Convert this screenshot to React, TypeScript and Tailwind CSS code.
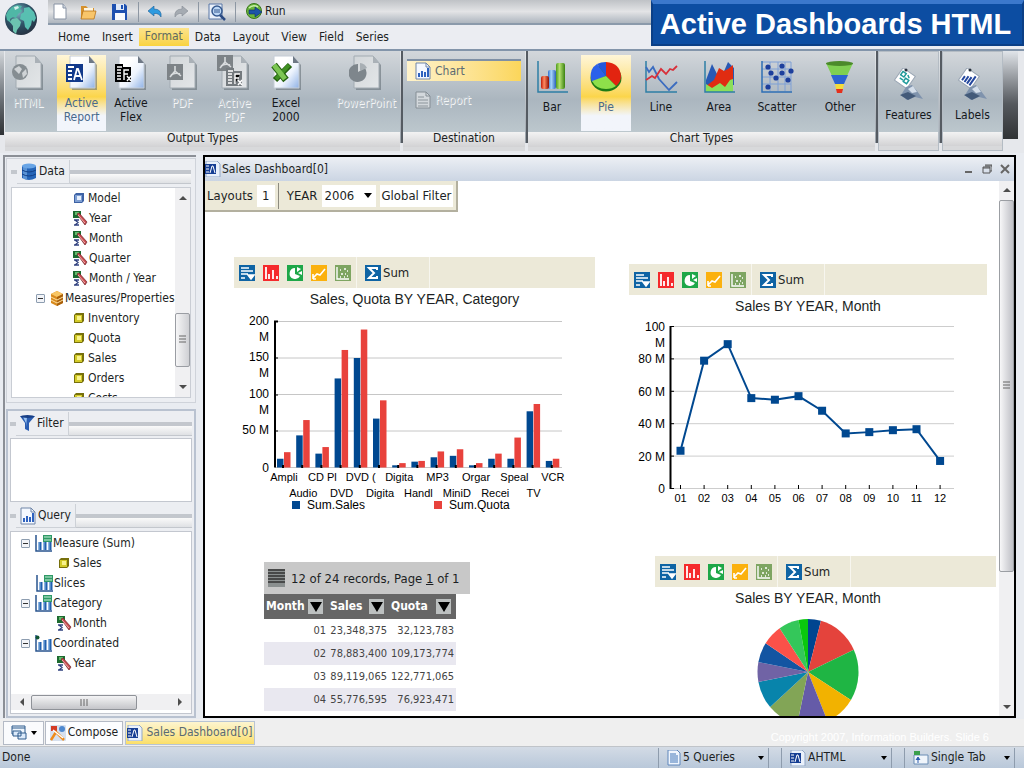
import React from "react";

type Kids = { children?: React.ReactNode };

/* ---------- icons ---------- */

function Globe() {
  return (
    <svg width="34" height="34" viewBox="0 0 34 34" aria-hidden="true">
      <defs>
        <radialGradient id="globe" cx="0.4" cy="0.3" r="0.75">
          <stop offset="0" stopColor="#7fb3c4" />
          <stop offset="0.5" stopColor="#2f5468" />
          <stop offset="1" stopColor="#26303f" />
        </radialGradient>
      </defs>
      <circle cx="17" cy="17" r="16" fill="url(#globe)" />
      <path d="M4 9 8 5l5-2 5 1-2 3 2 2-4 3-2 4-3-1-3 2 1 4-4-3-1-5z" fill="#4fb7a6" />
      <path d="M8 17l5-1 4 4-1 4-3 4-1 4-3-3 0-5-3-4z" fill="#6cc4b0" />
      <path d="M20 6l5-1 5 5 2 6-2 4-2-2-1 5-3 5-3-3-1-6-4-2 1-5 3-2z" fill="#58bfb1" />
      <path d="M10 5l4-1 1 2-4 2z" fill="#d7f0ec" />
    </svg>
  );
}

function Doc({ children, off = false }: Kids & { off?: boolean }) {
  return (
    <svg width="34" height="36" viewBox="0 0 34 36" aria-hidden="true">
      <defs>
        <linearGradient id="docOn" x1="0" y1="0" x2="1" y2="1">
          <stop offset="0.3" stopColor="#ffffff" />
          <stop offset="0.6" stopColor="#eef4fd" />
          <stop offset="1" stopColor="#8fb2e6" />
        </linearGradient>
        <linearGradient id="docOff" x1="0" y1="0" x2="1" y2="1">
          <stop offset="0" stopColor="#d2d6d9" />
          <stop offset="1" stopColor="#e3e6e8" />
        </linearGradient>
      </defs>
      <path d="M6 2h19l7 8v25H7z" fill="#5d6770" opacity="0.55" />
      <path d="M5 1h19l6 7v25H5z" fill={off ? "url(#docOff)" : "url(#docOn)"} stroke={off ? "#a2abb2" : "#c4ccd6"} strokeWidth="1" />
      <path d="M24 1l6 7h-6z" fill={off ? "#aab1b7" : "#6e7885"} />
      {children}
    </svg>
  );
}

const PdfMark = ({ x = 2, y = 9 }: { x?: number; y?: number }) => (
  <g transform={`translate(${x} ${y})`}>
    <rect width="16" height="16" fill="#7d8387" />
    <path d="M8 2v5L3 13M8 7l6 5M4 11q4-3 9-1" stroke="#d9dcde" strokeWidth="1.6" fill="none" />
  </g>
);

const FlexMark = ({ x = 1, y = 9, c = "#000" }: { x?: number; y?: number; c?: string }) => (
  <g transform={`translate(${x} ${y})`}>
    <path d="M0 0h8v3h8v15H0z" fill={c} />
    <path d="M2 3h5M2 6h4M2 9h4M2 12h4M2 15h4M9 16V6h5M9 10h4M12 12l4 5M16 12l-4 5" stroke="#fff" strokeWidth="1.4" />
  </g>
);

const ReportMark = ({ x = 1, y = 9 }: { x?: number; y?: number }) => (
  <g transform={`translate(${x} ${y})`}>
    <path d="M0 0h17v18H0z" fill="#123a8c" />
    <path d="M2 3h6M2 7h4M2 11h4M2 15h4" stroke="#fff" strokeWidth="1.8" />
    <path d="M8 16 11 5h1l4 11M9 12h5" stroke="#fff" strokeWidth="1.8" fill="none" />
  </g>
);

const ExcelMark = () => (
  <g fill="none">
    <path d="M5 10 17 25" stroke="#24600f" strokeWidth="7" />
    <path d="M21 10 6 25" stroke="#24600f" strokeWidth="6" />
    <path d="M20 10 7 24" stroke="#3f8f22" strokeWidth="4" />
    <path d="M5 10 16 24" stroke="#7cc653" strokeWidth="5" />
  </g>
);

function Svg({ w, h, children, box }: Kids & { w: number; h: number; box?: string }) {
  return (
    <svg width={w} height={h} viewBox={box ?? `0 0 ${w} ${h}`} className="shrink-0" aria-hidden="true">
      {children}
    </svg>
  );
}

const BarIcon = () => (
  <Svg w={32} h={34}>
    <defs>
      <linearGradient id="gb" x1="0" x2="1"><stop offset="0" stopColor="#4f9c1c" /><stop offset="0.4" stopColor="#b4e070" /><stop offset="1" stopColor="#3a8210" /></linearGradient>
      <linearGradient id="bb" x1="0" x2="1"><stop offset="0" stopColor="#2e6fd0" /><stop offset="0.4" stopColor="#a9d6fa" /><stop offset="1" stopColor="#2c62bc" /></linearGradient>
      <linearGradient id="rb" x1="0" x2="1"><stop offset="0" stopColor="#c01b08" /><stop offset="0.4" stopColor="#ff8a60" /><stop offset="1" stopColor="#8d0d02" /></linearGradient>
    </defs>
    <path d="M2 1v31h30" stroke="#2e7fa5" strokeWidth="1.5" fill="none" />
    <rect x="20" y="3" width="9" height="26" rx="2" fill="url(#gb)" />
    <rect x="12" y="10" width="8" height="19" rx="2" fill="url(#bb)" />
    <rect x="5" y="16" width="8" height="13" rx="2" fill="url(#rb)" />
  </Svg>
);

const PieIcon = () => (
  <Svg w={34} h={32}>
    <ellipse cx="17" cy="17" rx="15.500" ry="13.500" fill="#1e7c14" />
    <path d="M17 15 8 3q4-2 9-2z" fill="#2456dd" />
    <path d="M17 15 8 3Q0 8 2 18l1 3z" fill="#2b60ea" />
    <path d="M17 15V1q14 1 15 14 0 6-5 10z" fill="#e22410" />
    <path d="M17 15 3 20q4 8 14 8 6 0 10-3z" fill="#8ee04a" />
  </Svg>
);

const LineIcon = () => (
  <Svg w={34} h={34}>
    <path d="M2 1v31h31" stroke="#2e7fa5" strokeWidth="1.5" fill="none" />
    <path d="M2 7l3 5 4-5 6 12 10 11 8-8" stroke="#3b6cc0" strokeWidth="1.8" fill="none" />
    <path d="M2 20l6-4 3 2 6-9 5 5 4-5 3 1 4-4" stroke="#d8303a" strokeWidth="1.8" fill="none" />
  </Svg>
);

const AreaIcon = () => (
  <Svg w={32} h={34}>
    <path d="M3 20 9 4l5 10 5 2 6-14 6 6v17H3z" fill="#2859b4" />
    <path d="M3 26 11 20l5-12 5 3 4-2 5-4v24H3z" fill="#e02c12" />
    <path d="M3 24l6 4 8-5 5 4 5-7 3-1v13H3z" fill="#8bdf5a" />
    <path d="M2 1v31h30" stroke="#2e7fa5" strokeWidth="1.5" fill="none" />
  </Svg>
);

const ScatterIcon = () => (
  <Svg w={34} h={34}>
    <path d="M2 2h29v29M10 2v29M18 2v29M25 2v29M2 9h29M2 17h29M2 24h29" stroke="#7fa0d6" fill="none" />
    <path d="M2 1v31h30" stroke="#2e6fb5" strokeWidth="1.5" fill="none" />
    {[[8, 7], [22, 6], [11, 13], [22, 13], [31, 11], [16, 18], [28, 20], [8, 27]].map(([x, y]) => (
      <circle key={`${x}-${y}`} cx={x} cy={y} r="2.600" fill="#1d3f9c" />
    ))}
  </Svg>
);

const FunnelIcon = () => (
  <Svg w={30} h={34}>
    <path d="M1 3 7 16h15l6-13z" fill="#7fcf52" />
    <ellipse cx="14.500" cy="3.500" rx="13.500" ry="2.500" fill="#4b8a2b" />
    <path d="M6 15h17l-4 9h-9z" fill="#2c63d2" />
    <path d="M10 24h9l-1 5h-7z" fill="#f4dc3a" />
    <path d="M11 29h7l-1 4h-5z" fill="#e5301c" />
  </Svg>
);

const HandIcon = ({ labels = false }: { labels?: boolean }) => (
  <Svg w={34} h={34}>
    <g transform="rotate(35 13 11)">
      <rect x="5" y="3" width="15" height="15" fill="#fff" stroke="#9aa6b4" />
      {labels ? (
        <path d="M8 16v-5M11 16V9M14 16V8M17 16V5" stroke="#24479e" strokeWidth="2" />
      ) : (
        <path d="M7 6h4v4H7zM13 10h4v4h-4zM8 13h4M13 6l3 2" stroke="#1f9a9a" strokeWidth="1.5" fill="none" />
      )}
    </g>
    <circle cx="14" cy="2" r="1.500" fill="#27303c" />
    <path d="M14 19l6-2 5 6 6 8-8-2-8 3-6-5z" fill="#7f93ad" />
    <path d="M8 27l8-3 8 4-8 4z" fill="#435a79" />
    <path d="M16 21l5-3 4 6-5 1z" fill="#d4deea" />
  </Svg>
);

const ChartPage = ({ off = false }: { off?: boolean }) => (
  <Svg w={16} h={18}>
    <path d="M1 1h10l4 4v12H1z" fill={off ? "#d3d8dc" : "#f4f8ff"} stroke={off ? "#858e95" : "#7086a8"} />
    <path d="M11 1v4h4" fill="none" stroke={off ? "#858e95" : "#7086a8"} />
    {off ? (
      <path d="M3 6h6M3 9h10M3 12h10M3 15h10" stroke="#8b949a" />
    ) : (
      <path d="M4 15v-4M7 15V9M10 15v-5M13 15V6" stroke="#2e62bf" strokeWidth="2" />
    )}
  </Svg>
);

const ReportPage = () => (
  <Svg w={16} h={16}>
    <path d="M1 0h11l3 3v13H1z" fill="#eaf1fb" stroke="#92a7c6" />
    <rect x="0" y="3" width="11" height="10" fill="#173f94" />
    <path d="M1 5h3M1 8h3M1 11h3M5 12l2-7h1l2 7" stroke="#fff" fill="none" />
  </Svg>
);

const Tool = () => (
  <Svg w={16} h={16}>
    <path d="M1 1h8v7H1z" fill="#1c6a30" />
    <path d="M3 2h4v3H3z" fill="#63bd6d" />
    <path d="M5 4l2-1 8 9-2 3z" fill="#c8484e" stroke="#71262a" strokeWidth="0.7" />
    <path d="M6 5l7 8" stroke="#f0b4b0" />
    <path d="M2 10h5M2 15h5M3 10l3 2.500L3 15" stroke="#31427f" strokeWidth="1.300" fill="none" />
  </Svg>
);

const Cube = ({ blue = false }: { blue?: boolean }) => (
  <Svg w={10} h={10}>
    <path d="M0 2l2-2h8v8l-2 2H0z" fill={blue ? "#3d62a5" : "#77700c"} />
    <rect x="1" y="2" width="7" height="7" fill={blue ? "#7f9fd2" : "#d3cb2a"} />
    <rect x="3" y="3" width="4" height="4" fill={blue ? "#e6effc" : "#f8f28c"} />
  </Svg>
);

const Boxes = () => (
  <Svg w={14} h={15}>
    <path d="M1 3l6-3 6 3v9l-6 3-6-3z" fill="#d88a1e" />
    <path d="M1 3l6-3 6 3-6 3z" fill="#f8c665" />
    <path d="M7 6v9l6-3V3z" fill="#a9600b" />
    <path d="M1 6l6 3 6-3M1 9l6 3 6-3" stroke="#ffe0a0" fill="none" />
  </Svg>
);

const QueryBars = ({ plain = false }: { plain?: boolean }) => (
  <Svg w={17} h={17}>
    <path d="M1 0v16h16" stroke="#28548e" strokeWidth="1.5" fill="none" />
    <path d="M5 15V7M10 15V5M15 15V4" stroke="#2160ad" strokeWidth="3" />
    <path d="M4 15V7M9 15V5M14 15V4" stroke="#8ab7e8" />
    {plain ? (
      <circle cx="2.500" cy="2.500" r="2" fill="#153" />
    ) : (
      <>
        <rect x="8" y="0" width="9" height="7" fill="#2f9966" />
        <path d="M9 2h7M9 5h7" stroke="#c8f0d8" />
      </>
    )}
  </Svg>
);

const Minus = () => (
  <button aria-label="Collapse" className="grid size-[9px] shrink-0 place-items-center rounded-[1px] border border-[#8d9db0] bg-[#f2f4f8]">
    <span className="h-px w-[5px] bg-[#333]" />
  </button>
);

const Database = () => (
  <Svg w={16} h={18}>
    <path d="M1 3v12q7 4 14 0V3z" fill="#2565b8" />
    <path d="M3 4v12M5 4v12" stroke="#8ec1f2" />
    <ellipse cx="8" cy="3" rx="7" ry="2.500" fill="#69a5e6" />
    <path d="M1 7q7 4 14 0M1 11q7 4 14 0" stroke="#123f87" fill="none" />
  </Svg>
);

const Funnel = () => (
  <Svg w={15} h={17}>
    <path d="M0 1h15L9 8v8l-4-2V8z" fill="#2b5eb2" />
    <path d="M3 2h4l-1 10V8z" fill="#9cc5f3" />
    <ellipse cx="7.500" cy="1.500" rx="7" ry="1.500" fill="#183f86" />
  </Svg>
);

/* ---------- ribbon ---------- */

function RibbonGroup({ title, className, children }: Kids & { title: string; className: string }) {
  return (
    <section className={`flex flex-col ${className}`}>
      <div className="flex flex-1 bg-linear-to-b from-[#d3d7db] via-[#abb6bf] via-60% to-[#bcc7cd] pt-1">{children}</div>
      <h2 className="h-[15px] bg-linear-to-b from-[#f3f3f3] to-[#d2d2d4] text-center leading-[13px]">{title}</h2>
      <div className="h-1 bg-[#d8d9db]" />
    </section>
  );
}

const Divider = () => <div className="mb-2 w-[3px] border-r-2 border-[#555b62] bg-linear-to-b from-[#e4e7ea] to-[#9aa2aa]" />;

function BigButton({ icon, label, className, on = false, off = false }: { icon: React.ReactNode; label: string; className: string; on?: boolean; off?: boolean }) {
  const tone = on
    ? "bg-linear-to-b from-[#fff6d8] via-[#fbd549] via-55% to-[#f2f5fb] to-80% text-[#4a6a8c]"
    : off
      ? "text-[#b9c2c9] [text-shadow:1px_1px_0_#f4f6f7]"
      : "text-[#15181c]";
  return (
    <button disabled={off} className={`flex h-[76px] flex-col items-center leading-[14px] whitespace-pre-line ${tone} ${className}`}>
      <span className="flex h-9 items-center">{icon}</span>
      <span className="mt-[5px]">{label}</span>
    </button>
  );
}

function Ribbon() {
  return (
    <div className="flex h-[104px] shrink-0 border-t-2 border-[#8395aa] bg-[#e6e8ec] pb-[2px]">
      <div className="mr-px mb-4 w-1 bg-linear-to-b from-[#d3d7db] via-[#777d83] to-[#2f3235]" />
      <RibbonGroup title="Output Types" className="w-[395px]">
        <BigButton off className="w-[52px] pr-[6px]" label="HTML" icon={<Doc off><circle cx="9" cy="17" r="8" fill="#858d92" /><path d="M3 14l5-3 3 3-3 5zM11 18l4-4 1 5-4 4z" fill="#cfd3d6" /></Doc>} />
        <BigButton on className="w-[49px]" label={"Active\nReport"} icon={<Doc><ReportMark /></Doc>} />
        <BigButton className="w-[50px]" label={"Active\nFlex"} icon={<Doc><FlexMark /></Doc>} />
        <BigButton off className="w-[52px]" label="PDF" icon={<Doc off><PdfMark /></Doc>} />
        <BigButton off className="w-[52px]" label={"Active\nPDF"} icon={<Doc off><PdfMark x={0} y={0} /><FlexMark x={9} y={13} c="#747a7e" /></Doc>} />
        <BigButton className="w-[52px]" label={"Excel\n2000"} icon={<Doc><ExcelMark /></Doc>} />
        <BigButton off className="ml-[20px] w-[68px]" label="PowerPoint" icon={<Doc off><path d="M9 9v8l7-4a9 9 0 1 1-7-4z" fill="#7e868c" /><path d="M11 8a9 9 0 0 1 7 5l-7 3z" fill="#a8afb4" /></Doc>} />
      </RibbonGroup>
      <Divider />
      <RibbonGroup title="Destination" className="w-[122px]">
        <div className="flex flex-1 flex-col gap-2 px-1 pt-1">
          <button className="flex h-[22px] items-center gap-1 border-t-2 border-[#7f90a5] bg-linear-to-r from-[#fff3cb] to-[#fbd65a] pl-2 text-[#5c6a72]"><ChartPage />Chart</button>
          <button disabled className="flex h-[22px] items-center gap-1 pl-2 text-[#b9c2c9] [text-shadow:1px_1px_0_#f4f6f7]"><ChartPage off />Report</button>
        </div>
      </RibbonGroup>
      <Divider />
      <RibbonGroup title="Chart Types" className="w-[347px]">
        <BigButton className="w-[48px] pt-[4px]" label="Bar" icon={<BarIcon />} />
        <BigButton on className="ml-[5px] w-[50px] pt-[4px]" label="Pie" icon={<PieIcon />} />
        <BigButton className="ml-[5px] w-[50px] pt-[4px]" label="Line" icon={<LineIcon />} />
        <BigButton className="ml-[8px] w-[50px] pt-[4px]" label="Area" icon={<AreaIcon />} />
        <BigButton className="ml-[8px] w-[50px] pt-[4px]" label="Scatter" icon={<ScatterIcon />} />
        <BigButton className="ml-[13px] w-[50px] pt-[4px]" label="Other" icon={<FunnelIcon />} />
      </RibbonGroup>
      <Divider />
      <RibbonGroup title="" className="w-[61px] border border-[#b4bcc4]">
        <BigButton className="w-full pt-[11px]" label="Features" icon={<HandIcon />} />
      </RibbonGroup>
      <Divider />
      <RibbonGroup title="" className="w-[61px] border border-[#b4bcc4]">
        <BigButton className="w-full pt-[11px]" label="Labels" icon={<HandIcon labels />} />
      </RibbonGroup>
      <div className="mr-[6px] mb-3 flex-1 bg-linear-to-b from-[#e1e5ea] via-[#55595e] via-60% to-[#303335]" />
    </div>
  );
}

/* ---------- header ---------- */

function QuickBar() {
  const btn = "grid h-[22px] place-items-center";
  return (
    <div className="flex h-[25px] items-center border-b-2 border-[#8b9aab] bg-linear-to-b from-[#bfc2c6] via-[#e3e4e6] to-[#aeb6bf]">
      <button aria-label="New" className={`${btn} w-[24px]`}><Svg w={14} h={17}><path d="M1 1h9l3 4v11H1z" fill="#fff" stroke="#8792a3" /><path d="M10 1v4h3" fill="#cdd6e2" stroke="#8792a3" /></Svg></button>
      <button aria-label="Open" className={`${btn} w-[32px]`}><Svg w={17} h={16}><path d="M1 2h5l2 2h6v11H1z" fill="#d6912c" /><path d="M4 4h9v6H4z" fill="#fff6e0" /><path d="M3 7h13l-2 8H1z" fill="#f8c56a" stroke="#b8741a" strokeWidth="0.8" /></Svg></button>
      <button aria-label="Save" className={`${btn} w-[30px]`}><Svg w={15} h={16}><path d="M0 0h13l2 2v14H0z" fill="#1d50b0" /><path d="M4 0h8v6H4z" fill="#dfe9f8" /><path d="M9 1h2v4H9z" fill="#1d50b0" /><path d="M3 9h10v7H3z" fill="#f6f9fe" /></Svg></button>
      <span className="ml-[4px] h-[20px] w-px bg-[#8d97a3]" />
      <button aria-label="Undo" className={`${btn} w-[32px]`}><Svg w={14} h={12}><path d="M0 5l6-5v3q8 0 7 8-2-4-7-3.500V10z" fill="#2d9be0" stroke="#1b5c96" strokeWidth="0.6" /></Svg></button>
      <button aria-label="Redo" className={`${btn} w-[20px]`}><Svg w={14} h={12}><path d="M14 5 8 0v3Q0 3 1 11q2-4 7-3.500V10z" fill="#a5abb2" stroke="#858c94" strokeWidth="0.6" /></Svg></button>
      <span className="ml-[7px] h-[20px] w-px bg-[#8d97a3]" />
      <button aria-label="Preview" className={`${btn} w-[36px]`}><Svg w={18} h={18}><path d="M1 1h13v15H1z" fill="#eaf1fa" stroke="#5977a6" /><path d="M11 11l6 6" stroke="#2b4a82" strokeWidth="2.5" /><circle cx="9" cy="8" r="5" fill="#bcd7f5" stroke="#35598f" strokeWidth="1.500" /><path d="M6 7h6M6 9h6" stroke="#35598f" /></Svg></button>
      <span className="h-[20px] w-px bg-[#8d97a3]" />
      <button className="ml-[10px] flex h-[22px] items-center gap-[2px]"><Svg w={17} h={17}><circle cx="8" cy="8" r="7.500" fill="#6ab63c" stroke="#38761c" /><path d="M3 5q4-4 9-1" stroke="#c8efa8" strokeWidth="1.500" fill="none" /><path d="M3 7h6V4l7 5-7 5v-3H3z" fill="#1c54a8" stroke="#0e2d63" strokeWidth="0.6" /></Svg>Run</button>
    </div>
  );
}

function Header() {
  const tabs = ["Home", "Insert", "Format", "Data", "Layout", "View", "Field", "Series"];
  return (
    <header className="flex h-[49px] shrink-0 bg-[#ebedf2]">
      <div className="w-[48px] pt-[2px] pl-1"><Globe /></div>
      <div className="flex-1">
        <QuickBar />
        <nav className="flex h-[24px] items-center pl-[4px]">
          {tabs.map((t) => (
            <a key={t} href={`#${t}`} className={t === "Format" ? "h-[18px] bg-linear-to-b from-[#fce38a] to-[#f9d33e] px-[6px] leading-[17px] text-[#5f6b62]" : "px-[6px] leading-[18px]"}>{t}</a>
          ))}
        </nav>
      </div>
    </header>
  );
}

/* ---------- side panel ---------- */

function PanelTab({ icon, title }: { icon: React.ReactNode; title: string }) {
  return (
    <div className="flex h-[24px] items-end">
      <div className="h-[14px] w-[6px] border-t-4 border-[#c3c7cd]" />
      <h2 className="flex h-[24px] items-center gap-[2px] border-r border-b border-[#cdd1d7] bg-[#eceef2] px-1">{icon}{title}</h2>
      <div className="h-[14px] flex-1 border-t-4 border-b border-[#c3c7cd] bg-linear-to-b from-[#fafafa] to-[#dfe1e4]" />
    </div>
  );
}

function Node({ icon, text, pad, open = false }: { icon: React.ReactNode; text: string; pad: string; open?: boolean }) {
  return (
    <li className={`flex h-[20px] shrink-0 items-center whitespace-nowrap ${pad}`}>
      {open && <span className="mr-1 flex"><Minus /></span>}
      {icon}
      <span>{text}</span>
    </li>
  );
}

const Arrow = ({ dir }: { dir: "up" | "down" | "left" | "right" }) => {
  const d = { up: "M0 6h8L4 2z", down: "M0 2h8L4 6z", left: "M6 0v8L2 4z", right: "M2 0v8l4-4z" }[dir];
  return <Svg w={8} h={8}><path d={d} fill="#4d4d4d" /></Svg>;
};

function SidePanel() {
  return (
    <aside className="flex w-[193px] shrink-0 flex-col gap-[6px] border-t-2 border-l-2 border-[#8b8f96] bg-[#e9ecf1] pt-px pl-px">
      <section className="flex min-h-0 flex-[246] flex-col border border-[#cfd3da] bg-[#eceef2] p-1 pt-px">
        <PanelTab icon={<Database />} title="Data" />
        <div className="mt-[3px] flex min-h-0 flex-1 border border-[#c9cdd4] bg-white">
          <ul className="flex min-w-0 flex-1 flex-col overflow-hidden">
            <Node pad="gap-1 pl-[62px]" icon={<Cube blue />} text="Model" />
            {["Year", "Month", "Quarter", "Month / Year"].map((t) => <Node key={t} pad="gap-px pl-[60px]" icon={<Tool />} text={t} />)}
            <Node pad="gap-px pl-[24px]" open icon={<Boxes />} text="Measures/Properties" />
            {["Inventory", "Quota", "Sales", "Orders", "Costs"].map((t) => <Node key={t} pad="gap-1 pl-[62px]" icon={<Cube />} text={t} />)}
          </ul>
          <div className="flex w-[15px] shrink-0 flex-col items-center bg-[#f0f0f2] py-[6px]">
            <Arrow dir="up" />
            <div className="flex-[108]" />
            <div className="grid h-[54px] w-[15px] place-items-center rounded-[2px] border border-[#9a9da3] bg-linear-to-r from-[#f6f6f7] to-[#cfd0d4]">
              <Svg w={7} h={9}><path d="M0 1h7M0 4h7M0 7h7" stroke="#666" /></Svg>
            </div>
            <div className="flex-[16]" />
            <Arrow dir="down" />
          </div>
        </div>
      </section>
      <section className="flex min-h-0 flex-[312] flex-col border-2 border-[#b9c2d0] bg-[#eceef2] p-[2px] pt-px">
        <PanelTab icon={<Funnel />} title="Filter" />
        <div className="mt-[2px] h-[64px] border border-[#c3c7cf] bg-white" />
        <div className="mt-[2px]"><PanelTab icon={<ChartPage />} title="Query" /></div>
        <div className="mt-[3px] flex min-h-0 flex-1 flex-col border border-[#c3c7cf] bg-white">
          <ul className="flex min-h-0 flex-1 flex-col overflow-hidden pt-px">
            <Node open pad="gap-px pl-[10px]" icon={<QueryBars />} text="Measure (Sum)" />
            <Node pad="gap-1 pl-[48px]" icon={<Cube />} text="Sales" />
            <Node pad="gap-px pl-[25px]" icon={<QueryBars />} text="Slices" />
            <Node open pad="gap-px pl-[10px]" icon={<QueryBars />} text="Category" />
            <Node pad="gap-px pl-[45px]" icon={<Tool />} text="Month" />
            <Node open pad="gap-px pl-[10px]" icon={<QueryBars plain />} text="Coordinated" />
            <Node pad="gap-px pl-[45px]" icon={<Tool />} text="Year" />
          </ul>
          <div className="mb-[3px] flex h-[16px] items-center bg-[#f0f0f2] px-[7px]">
            <Arrow dir="left" />
            <div className="ml-[5px] grid h-[15px] w-[106px] place-items-center rounded-[2px] border border-[#8f9298] bg-linear-to-b from-[#f4f4f5] to-[#c4c5c9]">
              <Svg w={9} h={7}><path d="M1 0v7M4 0v7M7 0v7" stroke="#666" /></Svg>
            </div>
            <div className="flex-1" />
            <Arrow dir="right" />
          </div>
        </div>
      </section>
    </aside>
  );
}

/* ---------- dashboard widgets ---------- */

const tiles: { name: string; color: string; art: React.ReactNode }[] = [
  { name: "Table", color: "#0f64a4", art: <path d="M2 3h8M2 6h12M2 9h7M2 13h4M9 10h6l-3 4z" stroke="#fff" strokeWidth="1.500" fill="#fff" /> },
  { name: "Bar chart", color: "#f52a2c", art: <path d="M3 2v12M6 9v5M10 5v9M14 11v3" stroke="#fff" strokeWidth="1.800" /> },
  { name: "Pie chart", color: "#1ea748", art: <><path d="M8 3a5.500 5.500 0 1 0 5 8L8 9z" fill="#fff" /><path d="M10 2v5l4-3zM11 8l4-2v4z" fill="#fff" /></> },
  { name: "Line chart", color: "#fbb10e", art: <path d="M2 14V9M2 13l4-4 3 1 5-6M2 14h3" stroke="#fff" strokeWidth="1.600" fill="none" /> },
  { name: "Scatter chart", color: "#7ea562", art: <path d="M2 2v12h12M5 5h1M9 4h2M12 6h1M6 9h2M10 9h1M5 12h1M9 12h1M12 11h1" stroke="#fff" strokeWidth="1.400" fill="none" /> },
];

function WidgetBar() {
  return (
    <div className="flex h-[31px] items-center bg-[#ece9d8]">
      <div className="flex h-full w-[123px] items-center gap-2 border-r border-white/60 pl-[5px]">
        {tiles.map((t) => (
          <button key={t.name} aria-label={t.name} className="flex"><Svg w={16} h={16}><rect width="16" height="16" fill={t.color} />{t.art}</Svg></button>
        ))}
      </div>
      <button className="flex h-full w-[73px] items-center gap-[2px] border-r border-white/60 pl-2 text-[13px]">
        <Svg w={16} h={16}><rect width="16" height="16" fill="#0f64a4" /><path d="M12 5V3H4l5 5-5 5h8v-2" stroke="#fff" strokeWidth="2" fill="none" /></Svg>
        Sum
      </button>
    </div>
  );
}

const WidgetTitle = ({ children }: Kids) => (
  <h3 className="pt-[2px] text-center font-['Liberation_Sans',Arial,sans-serif] text-[14px] leading-[18px]">{children}</h3>
);

const sales = [12, 44, 19, 122, 150, 67, 3, 8, 14, 16, 3, 12, 12, 77, 9];
const quota = [21, 65, 28, 161, 189, 92, 6, 9, 22, 25, 6, 19, 41, 87, 12];
const cats = ["Ampli", "Audio", "CD Pl", "DVD", "DVD (", "Digita", "Digita", "Handl", "MP3", "MiniD", "Orgar", "Recei", "Speal", "TV", "VCR"];

function BarChart() {
  return (
    <svg viewBox="0 0 361 204" className="w-full font-['Liberation_Sans',Arial,sans-serif]" role="img" aria-label="Sales and quota by category">
      {[200, 150, 100, 50, 0].map((v) => (
        <path key={v} d={`M41 ${159.5 - v * 0.73}h287`} stroke="#c6c6c6" />
      ))}
      <g fontSize="12" textAnchor="end">
        <text x="35" y="17">200</text><text x="35" y="33">M</text>
        <text x="35" y="53">150</text><text x="35" y="69">M</text>
        <text x="35" y="90">100</text><text x="35" y="106">M</text>
        <text x="35" y="126">50 M</text>
        <text x="35" y="164">0</text>
      </g>
      {cats.map((c, i) => {
        const x = 43 + i * 19.2;
        return (
          <g key={i}>
            <rect x={x} y={159.5 - sales[i] * 0.73} width="6.500" height={sales[i] * 0.73} fill="#004890" />
            <rect x={x + 7} y={159.5 - quota[i] * 0.73} width="6.500" height={quota[i] * 0.73} fill="#e8423c" />
            <path d={`M${x + 6} 157v3`} stroke="#000" strokeWidth="2" />
            <text x={x + 7} y={i % 2 ? 189 : 173} fontSize="11" textAnchor="middle">{c}</text>
          </g>
        );
      })}
      <path d="M44 13.500h-3v146" stroke="#000" strokeWidth="2" fill="none" />
      <path d="M41 50h3M41 87h3M41 123h3" stroke="#000" />
      <rect x="58" y="193" width="8" height="8" fill="#004890" />
      <rect x="200" y="193" width="8" height="8" fill="#e8423c" />
      <g fontSize="12"><text x="73" y="201">Sum.Sales</text><text x="215" y="201">Sum.Quota</text></g>
    </svg>
  );
}

const monthly = [23.3, 78.9, 89.1, 55.8, 54.8, 57, 48, 34, 34.8, 36, 36.6, 17];

function LineChart() {
  const pts = monthly.map((v, i) => [51.5 + i * 23.6, 173.5 - v * 1.62]);
  return (
    <svg viewBox="0 0 358 190" className="w-full font-['Liberation_Sans',Arial,sans-serif]" role="img" aria-label="Sales by month">
      {[100, 80, 60, 40, 20, 0].map((v) => (
        <g key={v}>
          <path d={`M41 ${173.5 - v * 1.62}h284`} stroke="#cdcdcd" />
          <path d={`M41 ${173.5 - v * 1.62}h4`} stroke="#000" />
          <text x="36" y={178 - v * 1.62} fontSize="12" textAnchor="end">{v === 100 ? "100" : v === 0 ? "0" : `${v} M`}</text>
        </g>
      ))}
      <text x="36" y="32" fontSize="12" textAnchor="end">M</text>
      <path d="M41.500 11v163" stroke="#000" strokeWidth="2" />
      <polyline points={pts.map((p) => p.join(",")).join(" ")} fill="none" stroke="#004890" strokeWidth="2" />
      {pts.map(([x, y], i) => (
        <g key={i}>
          <path d={`M${x} 170v4`} stroke="#000" />
          <rect x={x - 4} y={y - 4} width="8" height="8" fill="#004890" />
          <text x={x} y="187" fontSize="11" textAnchor="middle">{String(i + 1).padStart(2, "0")}</text>
        </g>
      ))}
    </svg>
  );
}

const pieColors = ["#004590", "#e4433c", "#1fb544", "#f2b200", "#655ba8", "#82a556", "#0884ab", "#7063a5", "#1355a2", "#fb5149", "#34c75a", "#0ac80e"];

function PieChart() {
  const total = monthly.reduce((a, b) => a + b, 0);
  let acc = 0;
  const at = (v: number) => {
    const a = (v / total) * Math.PI * 2;
    return `${51 + 50.5 * Math.sin(a)} ${54 - 53 * Math.cos(a)}`;
  };
  return (
    <svg width="102" height="108" viewBox="0 0 102 108" role="img" aria-label="Sales share by month">
      {monthly.map((v, i) => {
        const from = at(acc);
        acc += v;
        return <path key={i} d={`M51 54L${from}A50.500 53 0 0 1 ${at(acc)}z`} fill={pieColors[i]} />;
      })}
    </svg>
  );
}

const rows = [
  ["01", "23,348,375", "32,123,783"],
  ["02", "78,883,400", "109,173,774"],
  ["03", "89,119,065", "122,771,065"],
  ["04", "55,776,595", "76,923,471"],
];

function DataTable() {
  return (
    <div className="w-[206px]">
      <div className="flex h-[32px] items-center gap-[6px] bg-[#c8c8c8] pl-1 text-[13px] whitespace-nowrap">
        <Svg w={17} h={18}><rect width="17" height="18" fill="#8a8f8f" /><path d="M0 1h17M0 4h17M0 7h17M0 10h17M0 13h17" stroke="#333" strokeWidth="1.500" /></Svg>
        <span>12 of 24 records, Page <a href="#page" className="underline">1</a> of 1</span>
      </div>
      <table className="w-[192px] table-fixed">
        <thead>
          <tr className="h-[25px] bg-[#666] text-left text-white">
            {["Month", "Sales", "Quota"].map((h, i) => (
              <th key={h} className={`p-0 ${["w-[64px]", "w-[61px]", "w-[67px]"][i]}`}>
                <div className="flex items-center justify-between pr-[5px] pl-[2px]">
                  {h}
                  <button aria-label={`Filter ${h}`} className="grid size-[15px] place-items-center bg-[#bcc0c0]"><Svg w={12} h={11}><path d="M0 1h12L6 11z" fill="#000" /></Svg></button>
                </div>
              </th>
            ))}
          </tr>
        </thead>
        <tbody>
          {rows.map((r) => (
            <tr key={r[0]} className="h-[23px] text-right text-[11px] text-[#444] even:bg-[#e9e8f0]">
              <td className="p-0 pr-[2px]">{r[0]}</td>
              <td className="p-0 pr-[2px]">{r[1]}</td>
              <td className="p-0 pr-[2px]">{r[2]}</td>
            </tr>
          ))}
        </tbody>
      </table>
    </div>
  );
}

function DashboardWindow() {
  return (
    <main className="flex min-w-0 flex-1 flex-col border-2 border-black bg-white">
      <div className="flex h-[24px] shrink-0 items-center gap-px bg-linear-to-b from-[#eceff4] to-[#cbd5e3] pr-1">
        <ReportPage />
        <h1 className="flex-1">Sales Dashboard[0]</h1>
        <div className="flex gap-2">
          <button aria-label="Minimize"><Svg w={10} h={10}><path d="M1 8h7" stroke="#666" strokeWidth="2" /></Svg></button>
          <button aria-label="Restore"><Svg w={10} h={10}><path d="M3 1h7v6H8M1 3h7v6H1zM1 4h7M3 2h7" stroke="#555" fill="none" /></Svg></button>
          <button aria-label="Close"><Svg w={10} h={10}><path d="M1 1l8 8M9 1 1 9" stroke="#666" strokeWidth="2" /></Svg></button>
        </div>
      </div>
      <div className="flex min-h-0 flex-1">
        <div className="min-w-0 flex-1 overflow-hidden">
          <div className="flex h-[31px] w-[253px] items-center border-r-2 border-b-2 border-[#b3b09f] bg-[#ece9d8] pl-[2px] text-[13px] whitespace-nowrap">
            <span>Layouts</span>
            <button className="ml-1 h-[22px] w-[18px] bg-white">1</button>
            <span className="ml-[3px] h-[26px] w-px bg-[#8d8b80]" />
            <label htmlFor="year" className="ml-[8px]">YEAR</label>
            <div className="relative ml-1 flex items-center">
              <select id="year" className="h-[22px] w-[54px] appearance-none bg-white pl-[3px]"><option>2006</option><option>2007</option></select>
              <span className="pointer-events-none absolute right-1"><Svg w={8} h={5}><path d="M0 0h8L4 5z" /></Svg></span>
            </div>
            <button className="ml-1 h-[22px] bg-white px-[2px]">Global Filter</button>
          </div>
          <div className="flex justify-between">
            <div className="ml-[29px] flex w-[361px] shrink-0 flex-col pt-[45px]">
              <WidgetBar />
              <WidgetTitle>Sales, Quota BY YEAR, Category</WidgetTitle>
              <BarChart />
              <div className="mt-[50px] ml-[30px]"><DataTable /></div>
            </div>
            <div className="flex w-[370px] shrink-0 flex-col pt-[52px]">
              <div className="w-[358px]">
                <WidgetBar />
                <WidgetTitle>Sales BY YEAR, Month</WidgetTitle>
                <LineChart />
              </div>
              <div className="mt-[51px] mr-[3px] ml-[26px]">
                <WidgetBar />
                <div className="w-[306px]">
                  <WidgetTitle>Sales BY YEAR, Month</WidgetTitle>
                  <div className="flex justify-center pt-[11px]"><PieChart /></div>
                </div>
              </div>
            </div>
          </div>
        </div>
        <div className="flex w-[15px] shrink-0 flex-col items-center bg-[#f0f0f2] py-[5px]">
          <Arrow dir="up" />
          <div className="mt-[6px] grid w-[15px] flex-[372] place-items-center rounded-[2px] border border-[#9b9ea3] bg-linear-to-r from-[#f7f7f8] to-[#bfc0c6]">
            <Svg w={7} h={9}><path d="M0 1h7M0 4h7M0 7h7" stroke="#666" /></Svg>
          </div>
          <div className="flex-[132]" />
          <Arrow dir="down" />
        </div>
      </div>
    </main>
  );
}

/* ---------- footer ---------- */

function StatusSelect({ icon, text, className }: { icon: React.ReactNode; text: string; className: string }) {
  return (
    <div className={`relative flex h-[20px] items-center gap-[2px] border-x border-[#8e9cad] pl-[8px] ${className}`}>
      {icon}
      <select aria-label={text} className="h-full min-w-0 flex-1 appearance-none bg-transparent"><option>{text}</option></select>
      <span className="pointer-events-none absolute right-[4px]"><Svg w={6} h={4}><path d="M0 0h6L3 4z" /></Svg></span>
    </div>
  );
}

function Footer() {
  return (
    <footer className="shrink-0">
      <div className="flex h-[28px] items-center border-b border-[#c0c4c9] bg-[#efefef] pl-[3px]">
        <button aria-label="Window list" className="flex h-[24px] w-[41px] items-center justify-center gap-1 border border-[#b4bac5] bg-[#fafbfd]">
          <Svg w={16} h={15}><path d="M1 1h13v8H1z" fill="#eef5fc" stroke="#2c5a8c" /><path d="M1 3h13" stroke="#2c5a8c" /><path d="M2 6h8v5H2zM7 8h8v6H7z" fill="#dceafa" stroke="#2c5a8c" /></Svg>
          <Svg w={6} h={4}><path d="M0 0h6L3 4z" /></Svg>
        </button>
        <button className="ml-px flex h-[24px] w-[78px] items-center justify-center gap-[2px] border border-[#b4bac5] bg-[#fcfdff]">
          <Svg w={16} h={16}><rect width="16" height="16" rx="1" fill="#d6e0ee" /><path d="M1 1h6v5H1z" fill="#d43c25" /><circle cx="12" cy="4" r="3" fill="#4f89cf" /><path d="M1 15 6 7l3 3 5 5" stroke="#ef8a18" strokeWidth="2.500" fill="none" /><path d="M3 5l10 8" stroke="#fff" strokeWidth="1.500" /></Svg>
          Compose
        </button>
        <button className="ml-[2px] flex h-[24px] w-[130px] items-center justify-center gap-[3px] border border-[#b7c4d4] bg-linear-to-b from-[#fdf5cf] to-[#fbdf68] text-[#596a74]">
          <ReportPage />Sales Dashboard[0]
        </button>
        <p className="ml-auto self-end pr-[35px] font-['Liberation_Sans',Arial,sans-serif] text-[11px] leading-[18px] text-white">Copyright 2007, Information Builders. Slide 6</p>
      </div>
      <div className="flex h-[21px] items-center bg-linear-to-b from-[#d3dbe5] to-[#b9c8da]">
        <span className="flex-1 pl-[2px]">Done</span>
        <StatusSelect className="w-[111px]" text="5 Queries" icon={<Svg w={14} h={16}><path d="M1 0h9l3 3v12H1z" fill="#eff5fd" stroke="#5e86bb" /><path d="M3 4h6M3 6h8M3 8h8M3 10h8M3 12h8" stroke="#4377b8" /></Svg>} />
        <StatusSelect className="ml-3 w-[111px]" text="AHTML" icon={<ReportPage />} />
        <StatusSelect className="ml-3 w-[111px]" text="Single Tab" icon={<Svg w={16} h={15}><path d="M1 5h14v9H1z" fill="#f0f5fb" stroke="#6b8db5" /><path d="M1 1h6v4H1z" fill="#3a9f4c" /><path d="M5 13V9M3 10l2-3 2 3" stroke="#2c5cb0" fill="#2c5cb0" /></Svg>} />
        <div className="w-[9px]" />
      </div>
    </footer>
  );
}

export default function App() {
  return (
    <div className="relative flex h-screen flex-col overflow-hidden bg-[#e9ecf1] font-['DejaVu_Sans_Condensed','Noto_Sans',sans-serif] text-[12px] leading-[15px] text-[#1c1f24]">
      <Header />
      <Ribbon />
      <div className="flex min-h-0 flex-1 gap-[7px] pt-[2px] pr-[8px] pb-px pl-[3px]">
        <SidePanel />
        <DashboardWindow />
      </div>
      <Footer />
      <div className="absolute top-0 right-0 flex h-[46px] w-[373px] items-center justify-center border-2 border-t-4 border-[#0b3f86] border-t-[#3b78cc] bg-[#0c4da2] pr-1 font-['Liberation_Sans',Arial,sans-serif] text-[29px] leading-[36px] font-bold whitespace-nowrap text-white">
        Active Dashboards HTML
      </div>
    </div>
  );
}
